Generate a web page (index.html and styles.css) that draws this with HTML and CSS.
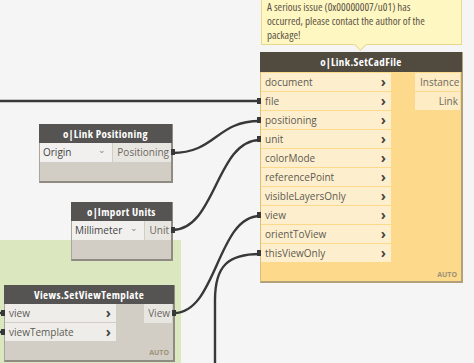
FILE: index.html
```html
<!DOCTYPE html>
<html lang="en">
<head>
    <meta charset="UTF-8">
    <title>Dynamo graph</title>
    <link rel="stylesheet" href="styles.css">
</head>
<body>
    <div class="canvas">
        <!-- group behind the view template node -->
        <div class="group"></div>

        <!-- wires -->
        <svg class="wires" width="474" height="363" viewBox="0 0 474 363">
            <path d="M0,101 L260,101"/>
            <path d="M172,153 C216,153 216,121 260,121"/>
            <path d="M172,230 C216,230 216,140 260,140"/>
            <path d="M174,313 C217,313 217,216 260,216"/>
            <path d="M215,363 L215,300 C215,266 228,254 260,254"/>
            <path d="M0,313 L4,313"/>
            <path d="M0,332 L4,332"/>
        </svg>

        <!-- error tooltip -->
        <div class="tooltip">
            A serious issue (0x00000007/u01) has<br>
            occurred, please contact the author of the<br>
            package!
        </div>

        <!-- main node -->
        <div class="node node-main">
            <div class="node-head">o|Link.SetCadFile</div>
            <div class="node-body">
                <div class="inputs">
                    <div class="port">document<span class="chev">&#x203A;</span></div>
                    <div class="port linked">file<span class="chev">&#x203A;</span></div>
                    <div class="port linked">positioning<span class="chev">&#x203A;</span></div>
                    <div class="port linked">unit<span class="chev">&#x203A;</span></div>
                    <div class="port">colorMode<span class="chev">&#x203A;</span></div>
                    <div class="port">referencePoint<span class="chev">&#x203A;</span></div>
                    <div class="port">visibleLayersOnly<span class="chev">&#x203A;</span></div>
                    <div class="port linked">view<span class="chev">&#x203A;</span></div>
                    <div class="port">orientToView<span class="chev">&#x203A;</span></div>
                    <div class="port linked">thisViewOnly<span class="chev">&#x203A;</span></div>
                </div>
                <div class="outputs">
                    <div class="out">Instance</div>
                    <div class="out">Link</div>
                </div>
            </div>
            <div class="node-foot">AUTO</div>
        </div>

        <!-- Link Positioning -->
        <div class="node node-gray node-pos">
            <div class="node-head">o|Link Positioning</div>
            <div class="node-row">
                <div class="dropdown">Origin<span class="caret">&#x2304;</span></div>
                <div class="out out-linked">Positioning</div>
            </div>
            <div class="node-foot"></div>
        </div>

        <!-- Import Units -->
        <div class="node node-gray node-units">
            <div class="node-head">o|Import Units</div>
            <div class="node-row">
                <div class="dropdown">Millimeter<span class="caret">&#x2304;</span></div>
                <div class="out out-linked">Unit</div>
            </div>
            <div class="node-foot"></div>
        </div>

        <!-- Views.SetViewTemplate -->
        <div class="node node-gray node-views">
            <div class="node-head">Views.SetViewTemplate</div>
            <div class="node-body">
                <div class="inputs">
                    <div class="port linked">view<span class="chev">&#x203A;</span></div>
                    <div class="port linked">viewTemplate<span class="chev">&#x203A;</span></div>
                </div>
                <div class="outputs">
                    <div class="out out-linked">View</div>
                </div>
            </div>
            <div class="node-foot">AUTO</div>
        </div>
    </div>
</body>
</html>
```

FILE: styles.css
```css
/* page */
body, html {
    margin: 0;
    padding: 0;
    font-family: "Open Sans", "Noto Sans", sans-serif;
    background-color: #f5f5f5;
    overflow: hidden;
}

.canvas {
    position: relative;
    width: 474px;
    height: 363px;
    overflow: hidden;
}

.group {
    position: absolute;
    left: 0;
    top: 240px;
    width: 181px;
    height: 130px;
    background-color: #dbe8bf;
}

.wires {
    position: absolute;
    left: 0;
    top: 0;
}

.wires path {
    fill: none;
    stroke: #383838;
    stroke-width: 2.4;
}

/* tooltip */
.tooltip {
    position: absolute;
    left: 261px;
    top: -3px;
    width: 189px;
    padding: 2px 5px 2px 5px;
    background-color: #fff7c2;
    border: 1px solid #e8d88e;
    color: #5a5446;
    font-size: 11px;
    font-stretch: 80%;
    line-height: 14px;
    white-space: nowrap;
}

.tooltip::after {
    content: "";
    position: absolute;
    left: 94px;
    bottom: -5px;
    width: 8px;
    height: 8px;
    background-color: #fff7c2;
    border-right: 1px solid #e8d88e;
    border-bottom: 1px solid #e8d88e;
    transform: rotate(45deg);
}

/* nodes */
.node {
    position: absolute;
    font-size: 10px;
    box-sizing: border-box;
}

.node-head {
    height: 19px;
    line-height: 19px;
    text-align: center;
    color: #fff;
    font-weight: bold;
    font-size: 11px;
    font-stretch: 77%;
    letter-spacing: 0.4px;
}

.node-body {
    display: flex;
    justify-content: space-between;
}

.inputs {
    display: flex;
    flex-direction: column;
}

.port {
    position: relative;
    display: flex;
    justify-content: space-between;
    height: 18px;
    line-height: 18px;
    padding: 0 5px 0 4px;
    margin-bottom: 1px;
    color: #5d5a52;
}

.port.linked::before {
    content: "";
    position: absolute;
    left: -4px;
    top: 6px;
    width: 4px;
    height: 6px;
    background-color: #383838;
}

.chev {
    font-weight: bold;
    font-size: 14px;
    color: #444;
}

.outputs {
    display: flex;
    flex-direction: column;
}

.out {
    height: 18px;
    line-height: 18px;
    padding: 0 2px 0 5px;
    margin-bottom: 1px;
    text-align: right;
    color: #6a665c;
    position: relative;
}

.out-linked::after {
    content: "";
    position: absolute;
    right: -4px;
    top: 6px;
    width: 4px;
    height: 6px;
    background-color: #383838;
}

.node-foot {
    text-align: right;
    font-size: 7px;
    font-weight: bold;
    color: #9c9276;
    padding-right: 4px;
}

/* main yellow node */
.node-main {
    left: 260px;
    top: 52px;
    width: 203px;
    height: 231px;
    background-color: #fdd98b;
    border: 1px solid #d9bd7b;
    border-right: 2px solid #b2a078;
    border-bottom: 2px solid #b2a078;
}

.node-main .node-head {
    background-color: #504a3f;
    margin: -1px -1px 0 -1px;
    height: 20px;
    line-height: 20px;
}

.node-main .inputs {
    width: 130px;
    margin-top: 1px;
}

.node-main .port {
    background-color: #fdefcd;
}

.node-main .outputs {
    width: 45px;
    margin-top: 1px;
    margin-right: 1px;
}

.node-main .out {
    background-color: #fdecc4;
    color: #6f6a5c;
}

.node-main .node-foot {
    height: 19px;
    line-height: 24px;
}

/* gray nodes */
.node-gray {
    background-color: #d2cec6;
    border: 1px solid #a9a59b;
    border-right: 2px solid #8f8b82;
    border-bottom: 2px solid #8f8b82;
}

.node-gray .node-head {
    background-color: #565452;
    margin: -1px -1px 0 -1px;
}

.node-row {
    display: flex;
    justify-content: space-between;
}

.dropdown {
    flex: 1;
    display: flex;
    justify-content: space-between;
    height: 19px;
    line-height: 19px;
    padding: 0 6px 0 3px;
    margin-right: 1px;
    background-color: #f1f0ee;
    color: #444;
}

.caret {
    font-size: 9px;
    color: #888;
    line-height: 14px;
}

.node-gray .out {
    height: 19px;
    line-height: 19px;
    background-color: #e8e6e1;
    color: #6b675f;
    padding: 0 2px 0 4px;
}

.node-pos {
    left: 39px;
    top: 124px;
    width: 134px;
    height: 59px;
}

.node-units {
    left: 71px;
    top: 202px;
    width: 102px;
    height: 59px;
}

.node-views {
    left: 4px;
    top: 285px;
    width: 171px;
    height: 77px;
}

.node-views .inputs {
    width: 111px;
}

.node-views .port {
    background-color: #eeedea;
}

.node-views .outputs {
    margin-right: 1px;
}

.node-views .node-foot {
    height: 18px;
    line-height: 22px;
}
```
